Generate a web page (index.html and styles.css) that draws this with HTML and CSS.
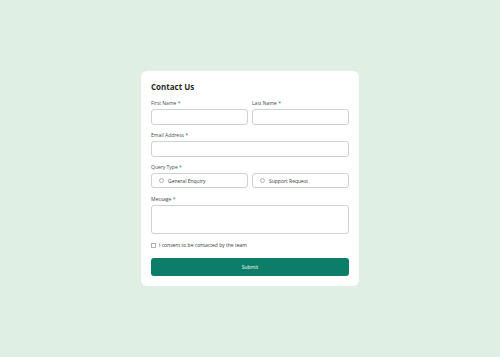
FILE: index.html
```html
<!DOCTYPE html>
<html lang="en">
<head>
<meta charset="utf-8">
<title>Contact Us</title>
<link rel="stylesheet" href="styles.css">
</head>
<body>
<main class="page">
  <form class="card">
    <h1 class="title">Contact Us</h1>
    <div class="row two field">
      <div class="sub">
        <label class="label">First Name <span class="req">*</span></label>
        <div class="input"></div>
      </div>
      <div class="sub">
        <label class="label">Last Name <span class="req">*</span></label>
        <div class="input"></div>
      </div>
    </div>
    <div class="field">
      <label class="label">Email Address <span class="req">*</span></label>
      <div class="input"></div>
    </div>
    <div class="field query">
      <label class="label">Query Type <span class="req">*</span></label>
      <div class="row two">
        <div class="input radio-box"><span class="radio"></span>General Enquiry</div>
        <div class="input radio-box"><span class="radio"></span>Support Request</div>
      </div>
    </div>
    <div class="field">
      <label class="label">Message <span class="req">*</span></label>
      <div class="input textarea"></div>
    </div>
    <div class="consent"><span class="check"></span>I consent to be contacted by the team</div>
    <div class="submit">Submit</div>
  </form>
</main>
</body>
</html>
```
FILE: styles.css
```css
* { box-sizing: border-box; }
html, body { margin: 0; padding: 0; }
body {
  background: #dfefe4;
  font-family: "Open Sans", "Noto Sans", sans-serif;
  color: #2a3b38;
  width: 500px;
  height: 357px;
}
.page {
  display: flex;
  justify-content: center;
  padding-top: 71px;
}
.card {
  width: 218px;
  background: #ffffff;
  border-radius: 6px;
  padding: 10px 10px 10px 10px;
  display: flex;
  flex-direction: column;
}
.title {
  margin: 0;
  font-size: 8px;
  line-height: 11px;
  font-weight: 700;
  color: #1f2a28;
  margin-bottom: 8px;
}
.row.two {
  display: grid;
  grid-template-columns: 1fr 1fr;
  gap: 4px;
}
.field { margin-bottom: 7px; }
.field.query { margin-bottom: 8px; }
.field, .sub { display: flex; flex-direction: column; }
.row.two.field { display: grid; }
.label {
  font-size: 5px;
  line-height: 6px;
  color: #3f4d4a;
  margin-bottom: 3px;
}
.req { color: #0c7d69; }
.input {
  height: 16px;
  border: 1px solid #ccd2d0;
  border-radius: 3px;
  background: #fff;
}
.radio-box {
  height: 15px;
  display: flex;
  align-items: center;
  padding-left: 7px;
  font-size: 5px;
  color: #2f3d3a;
}
.radio {
  width: 5px;
  height: 5px;
  border: 0.6px solid #aab3b0;
  border-radius: 50%;
  margin-right: 4px;
}
.textarea { height: 29px; }
.consent {
  display: flex;
  align-items: center;
  font-size: 5px;
  line-height: 6px;
  color: #2f3d3a;
  margin-top: 1px;
  margin-bottom: 10px;
}
.check {
  width: 5px;
  height: 5px;
  border: 0.6px solid #aab3b0;
  margin-right: 3px;
}
.submit {
  height: 18px;
  background: #0c7d69;
  border-radius: 3px;
  color: #fff;
  font-size: 5px;
  display: flex;
  align-items: center;
  justify-content: center;
}
```
